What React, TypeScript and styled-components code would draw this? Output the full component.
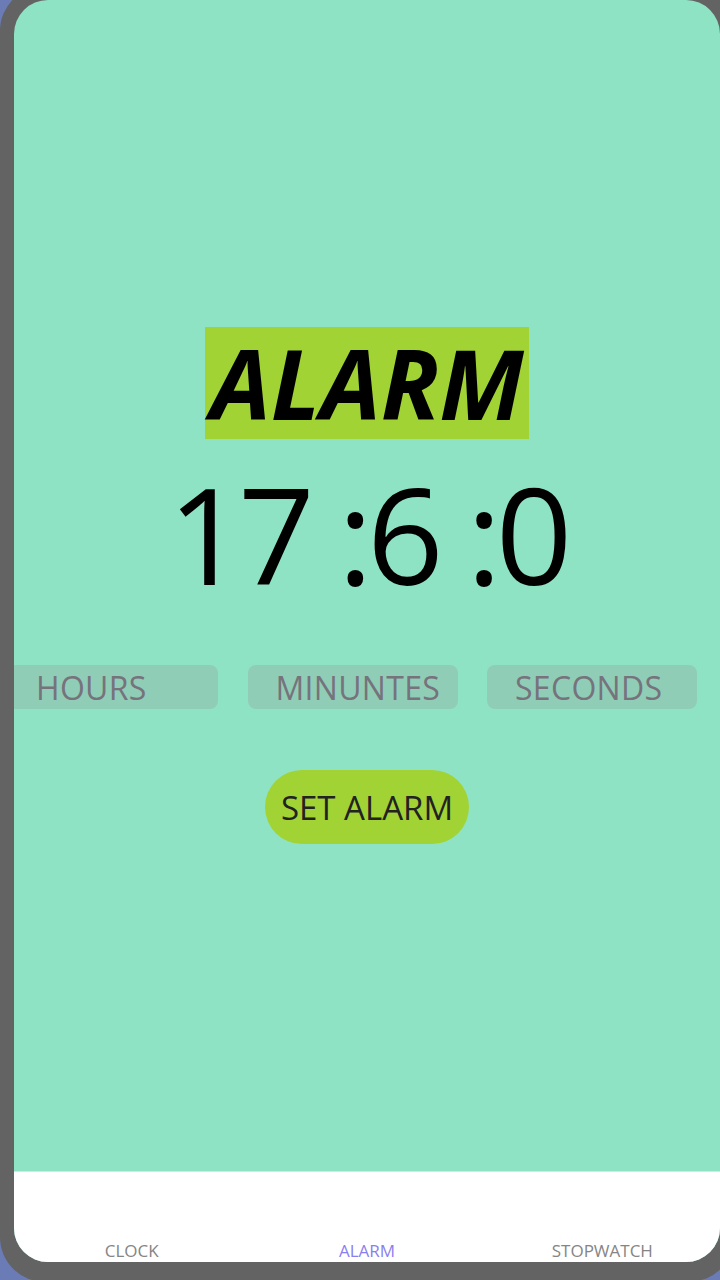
import styled, { createGlobalStyle } from 'styled-components';

const GlobalStyle = createGlobalStyle`
  html, body {
    margin: 0;
    padding: 0;
    background: #6b7bb6;
    overflow: hidden;
  }
  * {
    box-sizing: border-box;
  }
`;

const tabs = [
  { key: 'clock', label: 'CLOCK' },
  { key: 'alarm', label: 'ALARM' },
  { key: 'stopwatch', label: 'STOPWATCH' },
];

const fields = ['HOURS', 'MINUNTES', 'SECONDS'];

export default function App() {
  const hours = 17;
  const minutes = 6;
  const seconds = 0;

  return (
    <>
      <GlobalStyle />
      <Frame>
        <Screen>
          <Main>
            <Title>ALARM</Title>
            <Time>
              {hours} :{minutes} :{seconds}
            </Time>
            <FieldRow>
              {fields.map((f) => (
                <Field key={f} placeholder={f} />
              ))}
            </FieldRow>
            <SetButton type="button">SET ALARM</SetButton>
          </Main>
          <TabBar>
            {tabs.map((t) => (
              <TabItem key={t.key}>
                <TabLabel $active={t.key === 'alarm'}>{t.label}</TabLabel>
              </TabItem>
            ))}
          </TabBar>
        </Screen>
      </Frame>
    </>
  );
}

const Frame = styled.div`
  width: 734px;
  margin-top: -14px;
  padding: 14px 14px 20px;
  background: #636363;
  border-radius: 45px;
`;

const Screen = styled.div`
  display: flex;
  flex-direction: column;
  height: 1262px;
  border-radius: 34px;
  overflow: hidden;
  background: #8fe3c5;
`;

const Main = styled.div`
  flex: 1;
  display: flex;
  flex-direction: column;
  align-items: center;
  justify-content: center;
  font-family: 'Open Sans', 'Noto Sans', sans-serif;
`;

const Title = styled.h1`
  margin: 0;
  padding: 0 5px;
  background: #a2d335;
  color: #000;
  font-size: 96px;
  font-weight: 700;
  font-style: italic;
  line-height: 112px;
`;

const Time = styled.div`
  margin-top: 3px;
  color: #000;
  font-size: 134px;
  font-weight: 400;
  letter-spacing: -6px;
  line-height: 182px;
  white-space: pre;
`;

const FieldRow = styled.div`
  display: flex;
  gap: 29.5px;
  align-self: flex-start;
  margin: 41px 0 0 -6px;
`;

const Field = styled.input`
  width: 210px;
  height: 44px;
  padding: 0 0 0 28px;
  border: none;
  border-radius: 8px;
  outline: none;
  background: #90cdb7;
  font-family: 'Open Sans', 'Noto Sans', sans-serif;
  font-size: 32px;
  letter-spacing: 0.3px;
  color: #333;

  &::placeholder {
    color: #76737c;
  }
`;

const SetButton = styled.button`
  margin-top: 61px;
  height: 74px;
  padding: 0 16px;
  border: none;
  border-radius: 37px;
  background: #a2d335;
  color: #222;
  font-family: 'Open Sans', 'Noto Sans', sans-serif;
  font-size: 33px;
  cursor: pointer;
`;

const TabBar = styled.nav`
  display: grid;
  grid-template-columns: repeat(3, 1fr);
  height: 91px;
  background: #fff;
  border-top: 1px solid #e6e0e0;
`;

const TabItem = styled.div`
  display: flex;
  flex-direction: column;
  align-items: center;
  justify-content: flex-end;
`;

const TabLabel = styled.span<{ $active?: boolean }>`
  font-family: 'Open Sans', 'Noto Sans', sans-serif;
  font-size: 17px;
  line-height: 23px;
  color: ${({ $active }) => ($active ? '#8b7ff0' : '#858585')};
`;
